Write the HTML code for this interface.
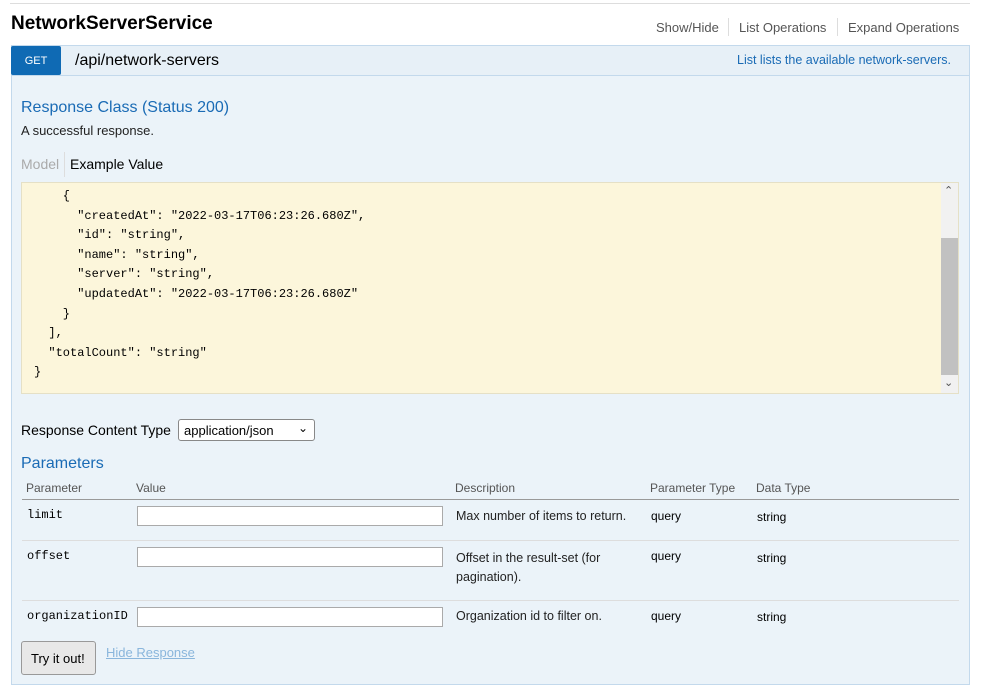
<!DOCTYPE html>
<html><head><style>
*{margin:0;padding:0;box-sizing:border-box}
body{width:997px;height:672px;overflow:hidden;background:#fff;font-family:"Liberation Sans",sans-serif;position:relative;color:#000}
.a{position:absolute;white-space:nowrap}
.mono{font-family:"Liberation Mono",monospace}
.blue{color:#1a6bb5}
input.i{position:absolute;height:20px;width:306px;border:1px solid #aaa;background:#fff}
.hr{position:absolute;left:22px;width:937px;height:1px;background:#ddd}
</style></head><body>
<div class="a" style="left:10px;top:3px;width:960px;height:1px;background:#ddd"></div>
<div class="a" style="left:11px;top:13px;font-size:19px;font-weight:bold">NetworkServerService</div>
<div class="a" style="left:656px;top:20px;font-size:13px;color:#555">Show/Hide</div>
<div class="a" style="left:728px;top:18px;width:1px;height:18px;background:#ddd"></div>
<div class="a" style="left:739px;top:20px;font-size:13px;color:#555">List Operations</div>
<div class="a" style="left:837px;top:18px;width:1px;height:18px;background:#ddd"></div>
<div class="a" style="left:848px;top:20px;font-size:13px;color:#555">Expand Operations</div>

<div class="a" style="left:11px;top:45px;width:959px;height:640px;background:#ebf3f9;border:1px solid #c3d9ec"></div>
<div class="a" style="left:11px;top:45px;width:959px;height:31px;background:#e7f0f7;border:1px solid #c3d9ec"></div>
<div class="a" style="left:11px;top:46px;width:50px;height:29px;background:#0f6ab4;color:#fff;font-size:11px;text-align:center;line-height:31px;border-radius:2px">GET</div>
<div class="a" style="left:75px;top:52px;font-size:16px;color:#000">/api/network-servers</div>
<div class="a blue" style="left:737px;top:53px;font-size:12.5px">List lists the available network-servers.</div>

<div class="a blue" style="left:21px;top:99px;font-size:16px">Response Class (Status 200)</div>
<div class="a" style="left:21px;top:123px;font-size:13px;color:#222">A successful response.</div>
<div class="a" style="left:21px;top:156px;font-size:14px;color:#aaa">Model</div>
<div class="a" style="left:64px;top:152px;width:1px;height:25px;background:#ddd"></div>
<div class="a" style="left:70px;top:156px;font-size:14px">Example Value</div>

<div class="a" style="left:21px;top:182px;width:938px;height:212px;background:#fcf6db;border:1px solid #e5e0c6"></div>
<div class="a" style="left:941px;top:183px;width:17px;height:210px;background:#f1f1f1"></div>
<div class="a" style="left:941px;top:238px;width:17px;height:137px;background:#c1c1c1"></div>
<div class="a" style="left:944px;top:184px;font-size:11px;color:#555">&#8963;</div>
<div class="a" style="left:944px;top:375px;font-size:11px;color:#555;transform:rotate(180deg)">&#8963;</div>
<pre class="a mono" style="white-space:pre;left:34px;top:187px;font-size:12px;line-height:19.6px;color:#000">    {
      "createdAt": "2022-03-17T06:23:26.680Z",
      "id": "string",
      "name": "string",
      "server": "string",
      "updatedAt": "2022-03-17T06:23:26.680Z"
    }
  ],
  "totalCount": "string"
}</pre>

<div class="a" style="left:21px;top:422px;font-size:14px">Response Content Type</div>
<div class="a" style="left:178px;top:419px;width:137px;height:22px;border:1px solid #888;border-radius:3px;background:#fff;font-size:13px;padding:3px 5px">application/json<span style="position:absolute;right:6px;top:1px;font-size:12px">&#8964;</span></div>

<div class="a blue" style="left:21px;top:455px;font-size:16px">Parameters</div>
<div class="a" style="left:26px;top:481px;font-size:12px;color:#555">Parameter</div>
<div class="a" style="left:136px;top:481px;font-size:12px;color:#555">Value</div>
<div class="a" style="left:455px;top:481px;font-size:12px;color:#555">Description</div>
<div class="a" style="left:650px;top:481px;font-size:12px;color:#555">Parameter Type</div>
<div class="a" style="left:756px;top:481px;font-size:12px;color:#555">Data Type</div>
<div class="hr" style="top:499px;background:#999"></div>

<div class="a mono" style="left:27px;top:508px;font-size:12px">limit</div>
<input class="i" style="left:137px;top:506px">
<div class="a" style="left:456px;top:509px;font-size:12.5px;color:#222">Max number of items to return.</div>
<div class="a" style="left:651px;top:509px;font-size:12px">query</div>
<div class="a" style="left:757px;top:510px;font-size:12px">string</div>
<div class="hr" style="top:540px"></div>

<div class="a mono" style="left:27px;top:549px;font-size:12px">offset</div>
<input class="i" style="left:137px;top:547px">
<div class="a" style="left:456px;top:549px;font-size:12.5px;color:#222;line-height:19px">Offset in the result-set (for<br>pagination).</div>
<div class="a" style="left:651px;top:549px;font-size:12px">query</div>
<div class="a" style="left:757px;top:551px;font-size:12px">string</div>
<div class="hr" style="top:600px"></div>

<div class="a mono" style="left:27px;top:609px;font-size:12px">organizationID</div>
<input class="i" style="left:137px;top:607px">
<div class="a" style="left:456px;top:609px;font-size:12.5px;color:#222">Organization id to filter on.</div>
<div class="a" style="left:651px;top:609px;font-size:12px">query</div>
<div class="a" style="left:757px;top:610px;font-size:12px">string</div>

<div class="a" style="left:21px;top:641px;width:75px;height:34px;border:1px solid #999;border-radius:3px;background:#e8e8e8;font-size:13px;padding:9px 0 0 9px">Try it out!</div>
<div class="a" style="left:106px;top:645px;font-size:13px;color:#8ab6dc;text-decoration:underline">Hide Response</div>
</body></html>
